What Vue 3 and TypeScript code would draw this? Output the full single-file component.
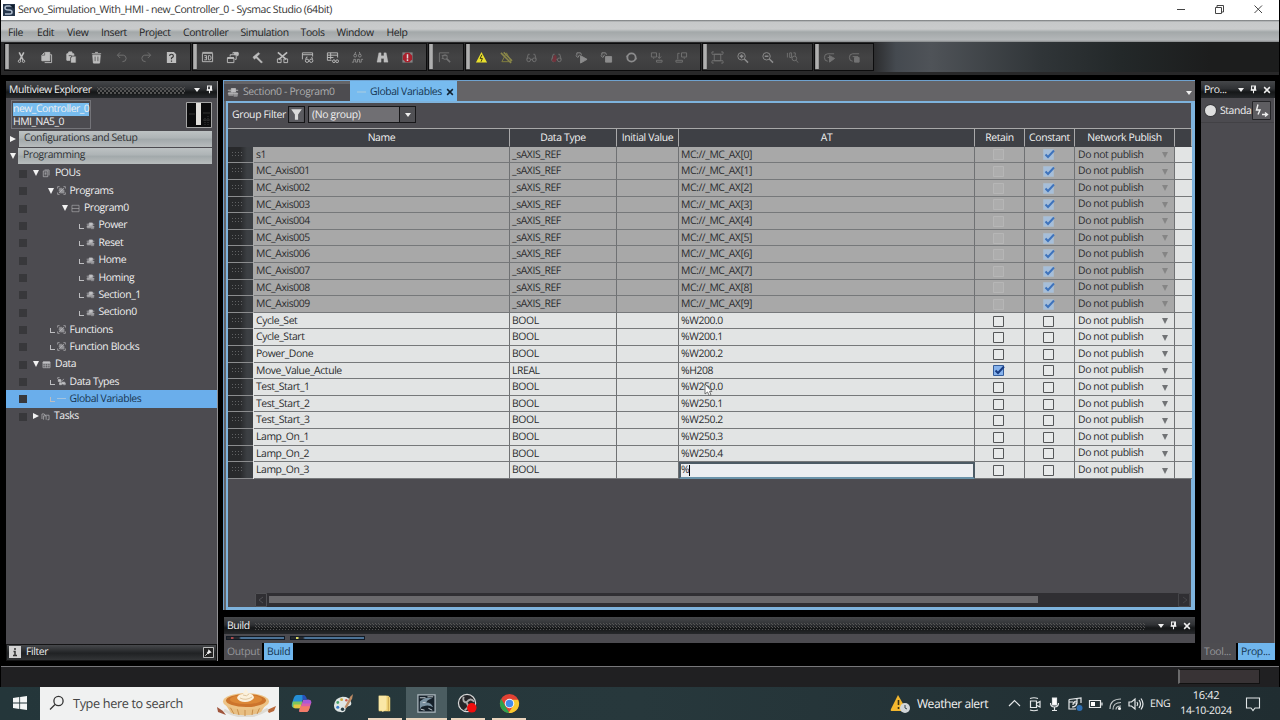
<script setup lang="ts">
interface ToolGroup { width: number; pad: number; items: string[] }
interface TreeNode { label: string; indent: number; state: 'open' | 'closed' | 'leaf'; icon: string; selected?: boolean }
interface Variable { name: string; type: string; at: string; system: boolean; retain: boolean; constant: boolean; editing?: boolean }

const menus = [
  ['File', 29], ['Edit', 30], ['View', 34], ['Insert', 38], ['Project', 44], ['Controller', 57.5],
  ['Simulation', 60], ['Tools', 36], ['Window', 50], ['Help', 40],
] as const

const glasses = '<path d="M2 9 L3.5 3.5 H5 M12 9 L10.5 3.5 H9" fill="none"/><circle cx="4" cy="9.500" r="2" fill="none"/><circle cx="10" cy="9.500" r="2" fill="none"/><path d="M6 9 H8"/>'
const icons: Record<string, string> = {
  cut: '<path d="M4.500 1.500 L8.700 9.500 M9.500 1.500 L5.300 9.500" stroke-width="1.700"/><circle cx="4.800" cy="11" r="1.300" fill="none"/><circle cx="9.200" cy="11" r="1.300" fill="none"/>',
  copy: '<path d="M5 1.500 H10.500 V10.500 H2 V4.500Z" fill="currentColor"/><path d="M11 4 H12.500 V12.500 H5" fill="none"/><path d="M2 4.500 H5 V1.500" stroke="#444" fill="none" stroke-width=".7"/>',
  paste: '<path d="M2 3 H9.500 V10 H2Z M4 1 H7.500 V3 H4Z" fill="currentColor"/><path d="M7.500 5.500 H12 V13 H6 V7Z" fill="currentColor" stroke="#3f3f40" stroke-width=".8"/><path d="M4 5 H7 V7" stroke="#555" fill="none"/>',
  trash: '<path d="M3 4.500 H11 L10.300 13 H3.700Z" fill="currentColor"/><path d="M2 3 H12 M5.500 1.500 H8.500"/><path d="M5.500 6 V11 M8.500 6 V11" stroke="#444" stroke-width=".8"/>',
  undo: '<path d="M3 4.500 H9 Q12 5 12 8 Q12 11.500 8 11.500 M5.500 1.500 L2.500 4.500 L5.500 7.500" fill="none"/>',
  redo: '<path d="M11 4.500 H5 Q2 5 2 8 Q2 11.500 6 11.500 M8.500 1.500 L11.500 4.500 L8.500 7.500" fill="none"/>',
  help: '<path d="M2 1 H9.500 L12 3.500 V13 H2Z" fill="currentColor" stroke="none"/><path d="M5 5.500 Q5 3.500 7 3.500 Q9 3.500 9 5.500 Q9 7 7 7.500 V9 M7 10.300 V11.700" stroke="#333" fill="none" stroke-width="1.300"/>',
  three: '<path d="M1.500 2.500 H12.500 V11.500 H1.500Z M1.500 1.500 H12.500 M3.500 5 H6 V9.500 H3.500 M4 7.200 H6 M8 5 H9.500 L10.800 6 V8.500 L9.500 9.500 H8Z" fill="none"/>',
  windows: '<path d="M1.500 7.500 H8.500 V12.500 H1.500Z" fill="none"/><path d="M1.500 7.500 H8.500" stroke-width="2"/><path d="M4.500 6 V4 H11 V9 H9.500 M7.500 3 V1.500 H13 V5 H11.500" fill="none"/><path d="M9 2 H13 V4 H9Z" fill="currentColor"/>',
  hammer: '<path d="M2 6.500 L8 1.500 L9.500 3 L6.500 6 L12.500 12 L11 13 L5.500 7.500 L3.500 9Z" fill="currentColor" stroke-width=".4"/>',
  nodes: '<path d="M2 1.500 L5 4 M12 1.500 L3 9 M2 1.500 L11 9" stroke-width="1.800"/><path d="M1.500 8.500 H5.500 V12.500 H1.500Z M8.500 8.500 H12.500 V12.500 H8.500Z" fill="none"/>',
  watch: '<path d="M1.500 9 V2 H12.500 V6 M1.500 4 H12.500" fill="none"/><circle cx="6.500" cy="10.500" r="1.800" fill="none"/><circle cx="11" cy="10.500" r="1.800" fill="none"/><path d="M5 9 L6 6.500 H7 M12.500 9 L11.500 6.500"/>',
  table: '<path d="M1.500 2 H12.500 V7 M1.500 2 V10 H6 M1.500 4.500 H12.500 M1.500 7 H8 M5 2 V9" fill="none"/><circle cx="8.500" cy="11" r="1.500" fill="none"/><circle cx="12" cy="11" r="1.500" fill="none"/>',
  trace: '<path d="M4 4 L5 1 M10 4 L9 1 M1 12 H3 V9 H5 V12 H7 V9 H9 V12 H11 V9 H13" fill="none"/><circle cx="4.500" cy="5" r="1.500" fill="none"/><circle cx="9.500" cy="5" r="1.500" fill="none"/>',
  find: '<path d="M3 2 H5.500 V5 H8.500 V2 H11 L13 12 H8.500 V8 H5.500 V12 H1Z" fill="currentColor" stroke-width=".3"/>',
  error: '<path d="M1.500 1.500 H12.500 V12.500 H1.500Z" fill="#858585" stroke="none"/><path d="M5 2 H9 L12 5 V9 L9 12 H5 L2 9 V5Z" fill="#a8202c" stroke="none"/><path d="M7 3.500 V8 M7 9 V10.800" stroke="#ddd" stroke-width="1.600"/>',
  inspect: '<path d="M1.500 12 V2 H12 M4 5 H10 M4 8 H6" fill="none"/><circle cx="7.500" cy="6.500" r="2.500" fill="none"/><path d="M9.200 8.200 L13 12" stroke-width="1.800"/>',
  warn: '<path d="M7 1 L13 12.500 H1Z" fill="#e9df2d" stroke="none"/><path d="M7.500 4 L5.500 8 H8 L6.500 11.500" stroke="#38350c" fill="none"/>',
  nowarn: '<path d="M2 11.500 L7 2 L12 11.500Z" fill="none" stroke="#85823f"/><path d="M1 2 L12 13 M4 1.500 L13 10.500" stroke="#8b884a" stroke-width="1.600"/>',
  glasses,
  glassesOff: glasses + '<path d="M4 5.500 L5.500 4 L7 5.500 V10 L5.500 12 L2 11Z" fill="#72333c" stroke="none"/>',
  play: '<path d="M2 5 V2 H6 L7 4 M1 5 L3 7 L5 4" fill="none"/><path d="M6 5 L13 9 L6 13Z" fill="currentColor"/>',
  stop: '<path d="M2 5 V2 H6 L7 4 M1 5 L3 7 L5 4" fill="none"/><path d="M6 6 H12.500 V12 H6Z" fill="currentColor"/>',
  ring: '<circle cx="7" cy="7" r="4.500" fill="none" stroke-width="2"/><path d="M1 6 L4 4 M13 8 L10 10"/>',
  transfer: '<path d="M1.500 2 H7 V6.500 H1.500Z M4 7 V8.500 M10 2 V8 M8.500 6 L10 8 L12 6 M7 10 H13 V12 H7Z" fill="none"/>',
  transferUp: '<path d="M7 2 H12.500 V6.500 H7Z M10 7 V8.500 M3 9 V2.500 H5 M1 10 H8 V12 H1Z" fill="none"/>',
  fit: '<path d="M3.500 3.500 H10.500 V10.500 H3.500Z M1 3 V1 H3 M11 1 H13 V3 M1 11 V13 H3 M11 13 H13 V11 M1 3.500 H13 M1 10.500 H13" fill="none"/>',
  zoomIn: '<circle cx="6" cy="5.700" r="4" fill="none"/><path d="M4 5.700 H8 M6 3.700 V7.700 M9 8.700 L13 12.500" stroke-width="1.600"/>',
  zoomOut: '<circle cx="6" cy="5.700" r="4" fill="none"/><path d="M4 5.700 H8 M9 8.700 L13 12.500" stroke-width="1.600"/>',
  zoomReset: '<path d="M1.500 2 V7 M4 2 H6 V7 H4Z M8 2 H10 V5" fill="none"/><circle cx="9" cy="8" r="2.500" fill="none"/><path d="M11 10 L13 12.500"/>',
  stepPlay: '<path d="M12 3 H5 Q1.500 3 1.500 7 Q1.500 11 5 11 M5 7 H9" fill="none"/><path d="M7 5 L12.500 8 L7 12Z" fill="currentColor"/>',
  stepStop: '<path d="M12 3 H5 Q1.500 3 1.500 7 Q1.500 11 5 11 M5 6 H11" fill="none"/><path d="M7 7 H12 V12 H7Z" fill="currentColor"/>',
  pou: '<path d="M2 3 H9 V12 H2Z M4 1.500 H11 V10 M4 5 H7 M4 7 H7 M4 9 H7" fill="none"/>',
  programs: '<path d="M1 4 V1 H4 M10 1 H13 V4 M13 10 V13 H10 M4 13 H1 V10" fill="none"/><path d="M4 3.500 H8 V6 H11 V11 H5 V8 H3Z" fill="currentColor" opacity=".6"/><path d="M3 11 L11 3"/>',
  program: '<path d="M1.500 2 H12.500 V12 H1.500Z M1.500 7 H12.500" fill="none" opacity=".8"/>',
  section: '<path d="M5 3 H10 V7 H5Z" fill="currentColor"/><path d="M2 7 H7 V11 H2Z M8 8 H12 V12 H8Z" fill="currentColor" opacity=".6"/><path d="M1 5 H5 M10 5 H13 M1 9 H13"/>',
  data: '<path d="M1.500 3 H12.500 V12 H1.500Z M1.500 6 H12.500 M5 6 V12 M9 6 V12 M1.500 9 H12.500" fill="none"/><path d="M2 3 H12 V5 H2Z" fill="currentColor"/>',
  types: '<path d="M1 3 V1 H4 M13 9 V12 H10" fill="none"/><path d="M2 4 H6 V7 H2Z M8 8 H12 V11 H8Z M4 9 H7 V12 H4Z" fill="currentColor"/><path d="M4 9 L11 3"/>',
  global: '<path d="M0 7 H14" stroke="#a6c5de" stroke-width="1.500"/>',
  tasks: '<path d="M1.500 11 V3 H5 L6 5 H12.500 V12 H10 M4 6 V12 M4 6 H8 V12" fill="none"/>',
  pin: '<path d="M4 1.500 H10 V7.500 H4Z" fill="none" stroke-width="1.700"/><path d="M8.500 2 V7 M2.500 8 H11.500 M7 8 V13" stroke-width="1.700"/>',
  close: '<path d="M2 2 L12 12 M12 2 L2 12" stroke-width="2.600"/>',
}

const groups: ToolGroup[] = [
  { width: 187, pad: 0, items: ['cut', 'copy', 'paste', 'trash', 'undo.dim', 'redo.dim', 'help'] },
  { width: 235, pad: -2, items: ['three', 'windows', 'hammer', 'nodes', 'watch', 'table', 'trace.mid', 'find', 'error'] },
  { width: 36, pad: -1, items: ['inspect.dim'] },
  { width: 236, pad: -1, items: ['warn', 'nowarn', 'glasses.dim', 'glassesOff.dim', 'play.mid', 'stop.mid', 'ring.mid', 'transfer.dim', 'transferUp.dim'] },
  { width: 111, pad: -2, items: ['fit.dim', 'zoomIn.mid', 'zoomOut.mid', 'zoomReset.dim'] },
  { width: 60, pad: -2, items: ['stepPlay.dim', 'stepStop.dim'] },
]

const tree: TreeNode[] = [
  { label: 'POUs', indent: 0, state: 'open', icon: 'pou' },
  { label: 'Programs', indent: 1, state: 'open', icon: 'programs' },
  { label: 'Program0', indent: 2, state: 'open', icon: 'program' },
  ...['Power', 'Reset', 'Home', 'Homing', 'Section_1', 'Section0'].map((label): TreeNode => ({ label, indent: 3, state: 'leaf', icon: 'section' })),
  { label: 'Functions', indent: 1, state: 'leaf', icon: 'programs' },
  { label: 'Function Blocks', indent: 1, state: 'leaf', icon: 'programs' },
  { label: 'Data', indent: 0, state: 'open', icon: 'data' },
  { label: 'Data Types', indent: 1, state: 'leaf', icon: 'types' },
  { label: 'Global Variables', indent: 1, state: 'leaf', icon: 'global', selected: true },
  { label: 'Tasks', indent: 0, state: 'closed', icon: 'tasks' },
]

const axes: Variable[] = Array.from({ length: 10 }, (_, i) => ({
  name: i === 0 ? 's1' : `MC_Axis00${i}`, type: '_sAXIS_REF', at: `MC://_MC_AX[${i}]`, system: true, retain: false, constant: true,
}))
const user: Variable[] = ([
  ['Cycle_Set', 'BOOL', '%W200.0'], ['Cycle_Start', 'BOOL', '%W200.1'], ['Power_Done', 'BOOL', '%W200.2'],
  ['Move_Value_Actule', 'LREAL', '%H208'], ['Test_Start_1', 'BOOL', '%W250.0'], ['Test_Start_2', 'BOOL', '%W250.1'],
  ['Test_Start_3', 'BOOL', '%W250.2'], ['Lamp_On_1', 'BOOL', '%W250.3'], ['Lamp_On_2', 'BOOL', '%W250.4'], ['Lamp_On_3', 'BOOL', '%'],
] as const).map(([name, type, at]) => ({ name, type, at, system: false, retain: type === 'LREAL', constant: false, editing: at === '%' }))
const variables = [...axes, ...user]
const columns = ['', 'Name', 'Data Type', 'Initial Value', 'AT', 'Retain', 'Constant', 'Network Publish', '']
</script>

<template>
  <div class="screen">
    <header class="titlebar">
      <svg class="applogo" viewBox="0 0 12 12"><path d="M0 0H12V12H0Z" fill="#26364b" /><path d="M9 2H4Q2 2 2 4Q2 6 6 6Q9 6 9 8Q9 10 7 10H2" fill="none" stroke="#aebccd" stroke-width="1.500" /><path d="M7 1L11 5V1Z" fill="#101c2b" /></svg>
      <span class="title">Servo_Simulation_With_HMI - new_Controller_0 - Sysmac Studio (64bit)</span>
      <svg class="winbtns" viewBox="0 0 100 20" fill="none" stroke="#444"><path d="M8 9.500H16" /><path d="M46.500 7.500H52.500V13.500H46.500ZM48 7V5.500H54.500V12H53" /><path d="M85.500 5.500L93 13M93 5.500L85.500 13" /></svg>
    </header>
    <nav class="menubar">
      <span v-for="[label, w] in menus" :key="label" :style="{ width: w + 'px' }"><b>{{ label }}</b></span>
    </nav>
    <div class="toolbar">
      <div v-for="(g, gi) in groups" :key="gi" class="group" :style="{ width: g.width + 'px' }">
        <i class="grip" />
        <div class="tools" :style="{ marginLeft: g.pad + 'px' }">
          <span v-for="item in g.items" :key="item" class="tool" :class="item.split('.')[1]">
            <svg viewBox="0 0 14 14" v-html="icons[item.split('.')[0]]" />
          </span>
        </div>
      </div>
    </div>

    <main class="workspace">
      <aside class="explorer">
        <div class="panelhead">
          <span>Multiview Explorer</span><i class="dots" /><i class="down" />
          <svg class="ico" viewBox="0 0 14 14" v-html="icons.pin" />
        </div>
        <div class="devices">
          <div class="devlist"><div class="active">new_Controller_0</div><div>HMI_NA5_0</div></div>
          <svg class="thumb" viewBox="0 0 26 26"><path d="M.5 .5H25.500V25.500H.5Z" fill="#0c0c0d" stroke="#a5a5a5" /><path d="M10 1H15V23H10Z" fill="#e2e0dc" /><path d="M3 12H9M17 11H24M17 18H24" stroke="#333" /><path d="M19 16V24M22 14V23" stroke="#38383a" stroke-dasharray="1 1" /></svg>
        </div>
        <div class="section"><i class="tri right" /><span>Configurations and Setup</span></div>
        <div class="section"><i class="tri open" /><span>Programming</span></div>
        <div class="tree">
          <div v-for="n in tree" :key="n.label" class="node" :class="{ selected: n.selected }">
            <i class="mark" />
            <div class="branch" :style="{ marginLeft: n.indent * 14.5 + 'px' }">
              <i v-if="n.state === 'open'" class="tri open" />
              <i v-else-if="n.state === 'closed'" class="tri right" />
              <i v-else class="elbow" />
              <svg class="ico" viewBox="0 0 14 14" v-html="icons[n.icon]" />
              <span>{{ n.label }}</span>
            </div>
          </div>
        </div>
        <div class="filterbar">
          <svg class="info" viewBox="0 0 12 12"><path d="M0 0H12V12H0Z" fill="#d3d3d3" /><path d="M6 2V4M4.500 5.500H6V9M4 9.500H8" fill="none" stroke="#333" stroke-width="1.500" /></svg>
          <span>Filter</span>
          <svg class="filterpin" viewBox="0 0 12 12"><path d="M.5 .5H11.500V11.500H.5Z" fill="#222" stroke="#d0d0d0" /><path d="M6 2.500L9.500 6L7.500 6.500L5.500 8L4 6.500L5.500 4.500Z" fill="#eee" /><path d="M2.500 9.500L5 7" stroke="#eee" /></svg>
        </div>
      </aside>

      <section class="center">
        <div class="editor">
          <div class="tabs">
            <div class="tab"><svg class="ico" viewBox="0 0 14 14" v-html="icons.section" /><span>Section0 - Program0</span></div>
            <div class="tab current"><i class="dash" /><span>Global Variables</span><svg class="x" viewBox="0 0 14 14" v-html="icons.close" /></div>
            <i class="down" />
          </div>
          <div class="frame">
            <div class="groupfilter">
              <span>Group Filter</span>
              <svg class="funnel" viewBox="0 0 16 16"><path d="M.5 .5H15.500V15.500H.5Z" fill="#5b5b60" stroke="#151517" /><path d="M3 3H13L9.500 8V13H6.500V8Z" fill="#dadada" /></svg>
              <div class="select"><span>(No group)</span><b><i class="down" /></b></div>
            </div>
            <div class="grid">
              <div class="row head"><div v-for="(c, i) in columns" :key="i" class="cell">{{ c }}</div></div>
              <div v-for="v in variables" :key="v.name" class="row" :class="{ system: v.system }">
                <div class="cell handle"><i /></div>
                <div class="cell">{{ v.name }}</div>
                <div class="cell">{{ v.type }}</div>
                <div class="cell" />
                <div class="cell" :class="{ editing: v.editing }">{{ v.at }}<i v-if="v.editing" class="caret" /></div>
                <div v-for="(on, k) in [v.retain, v.constant]" :key="k" class="cell check">
                  <svg viewBox="0 0 12 12" :class="{ on }"><path class="box" d="M.5 .5H10.500V10.500H.5Z" /><path v-if="on" class="tick" d="M2.500 5.500L5 8L11 1.500" /></svg>
                </div>
                <div class="cell publish"><span>Do not publish</span><i class="down" /></div>
                <div class="cell tail" />
              </div>
            </div>
            <div class="hscroll">
              <svg class="arrow" viewBox="0 0 12 14"><path d="M.5 .5H11.500V13.500H.5Z M8 4L4 7L8 10" fill="none" stroke="#515155" /></svg>
              <div class="track"><i /></div>
              <svg class="arrow" viewBox="0 0 12 14"><path d="M.5 .5H11.500V13.500H.5Z M5 4L9 7L5 10" fill="none" stroke="#454549" /></svg>
            </div>
            <svg class="pointer" viewBox="0 0 9 14"><path d="M1 1V11L3.500 9L5.200 12.500L7 11.600L5.500 8.500H8Z" fill="#fff" stroke="#555" stroke-width=".8" /></svg>
          </div>
        </div>
        <div class="build">
          <div class="panelhead"><span>Build</span><i class="dots" /><i class="down" /><svg class="ico" viewBox="0 0 14 14" v-html="icons.pin" /><svg class="x" viewBox="0 0 14 14" v-html="icons.close" /></div>
          <div class="strips"><i class="errors" /><i class="warnings" /></div>
        </div>
        <div class="bottomtabs"><span class="out">Output</span><span class="current">Build</span></div>
      </section>

      <aside class="props">
        <div class="panelhead"><span>Pro...</span><i class="down" /><svg class="ico" viewBox="0 0 14 14" v-html="icons.pin" /><svg class="x" viewBox="0 0 14 14" v-html="icons.close" /></div>
        <div class="propbody">
          <div class="standard"><i class="disc" /><span>Standa</span>
            <svg viewBox="0 0 19 19"><path d="M.5 .5H18.500V18.500H.5Z" fill="#5e5d61" stroke="#242427" /><path d="M6 3.500L4.500 9H8L6 13.500M10 13.500H15M13 11.500L15.500 13.500L13 15.500" fill="none" stroke="#eee" stroke-width="1.400" /></svg>
          </div>
        </div>
        <div class="bottomtabs"><span class="tool-tab">Tool...</span><span class="current">Prop...</span></div>
      </aside>
    </main>

    <div class="status"><i /></div>

    <footer class="taskbar">
      <svg class="win" viewBox="0 0 14 14"><path d="M0 2L6.300 1V6.600H0ZM7.100 .9L14 0V6.600H7.100ZM0 7.400H6.300V13L0 12ZM7.100 7.400H14V14L7.100 13.100Z" fill="#f4f6f6" /></svg>
      <div class="search">
        <svg class="glass" viewBox="0 0 16 16" fill="none" stroke="#333" stroke-width="1.300"><circle cx="9.500" cy="6" r="4.600" /><path d="M6 9.500L1 14.500" /></svg>
        <span>Type here to search</span>
        <svg class="pie" viewBox="0 0 62 28">
          <path d="M1 18L7 22L10 26L2 23Z" fill="#a0553c" /><path d="M51 21L60 17L58 22L53 24Z" fill="#b8683a" /><path d="M8 21Q30 34 52 20" fill="none" stroke="#dedbd4" stroke-width="3" />
          <path d="M8 13L15 24Q30 29 45 23L52 12Z" fill="#e8bf82" /><path d="M14 18L18 25M21 19L23 26M29 20V27M37 19L36 26M44 18L41 25" stroke="#c98e4a" />
          <ellipse cx="30" cy="12.500" rx="23" ry="8.500" fill="#edc487" /><ellipse cx="30" cy="11.500" rx="20" ry="6.500" fill="#cc742c" /><ellipse cx="30" cy="10.500" rx="16" ry="4.500" fill="#dc8837" />
          <path d="M21 9Q22 5 27 5Q28 1 30 0Q32 2 32 4Q38 5 38 9Q35 13 29 13Q23 13 21 9Z" fill="#fbf1dd" /><path d="M24 9Q30 12 36 8M27 6Q31 8 33 5" fill="none" stroke="#dfc6a0" />
        </svg>
      </div>
      <div class="apps">
        <span class="app copilot"><svg viewBox="0 0 22 22"><path d="M6 2H12Q14 2 13 5L10 15H3Q0 15 1 11L3 5Q4 2 6 2Z" fill="#258fd6" /><path d="M2 9H12L10 16H4Q0 16 2 9Z" fill="#7dc65c" /><path d="M3 12H11L10 16H4Q2 15 3 12Z" fill="#e5c642" /><path d="M13 7H18Q22 7 21 11L19 17Q18 20 15 20H10Q8 20 9 17Z" fill="#d95eab" /><path d="M13 7H19Q22 8 21 11H12Z" fill="#a85ad7" /><path d="M9 17L10 14H20L19 17Q18 20 15 20H10Q8 20 9 17Z" fill="#f27c69" /><path d="M12 2H14Q16 3 17 7H12Z" fill="#2853bb" /></svg></span>
        <span class="app paint"><svg viewBox="0 0 22 22"><path d="M1 13Q2 5 10 4Q18 4 19 10Q20 13 16 14Q13 15 13 18Q12 21 8 20Q1 19 1 13Z" fill="#dfe5e4" /><path d="M12 15L18 4L21 1L20 6L14 16Z" fill="#bf8c65" /><circle cx="5" cy="10" r="1.500" fill="#4aa36b" /><circle cx="9" cy="7" r="1.500" fill="#caa83b" /><circle cx="5" cy="15" r="1.600" fill="#3b7dcb" /><circle cx="10" cy="17" r="1.800" fill="#263b42" /><circle cx="14" cy="7.500" r="1.300" fill="#cf5a4d" /></svg></span>
        <span class="app open"><svg viewBox="0 0 22 22"><path d="M5 3H15L17 5V19H5Z" fill="#f2d67a" /><path d="M5 3H13V17L9 20L8 18H5Z" fill="#fae7a5" /><path d="M15 4V19" stroke="#c9a44f" /></svg></span>
        <span class="app open focus"><svg viewBox="0 0 22 22"><path d="M2 2H20V20H2Z" fill="#152029" stroke="#aebac1" stroke-width="1.300" /><path d="M4 9Q10 3 17 6Q11 7 11 10Q16 10 18 15Q13 12 8 14Q5 14 4 18Z" fill="#7890a0" /><path d="M4 5H10M13 16L17 18M7 10H10M12 4H18M5 17L9 18" stroke="#c7d0d5" /></svg></span>
        <span class="app open"><svg viewBox="0 0 22 22"><circle cx="10.500" cy="10.500" r="9" fill="#252528" stroke="#d7d7d7" stroke-width="1.300" /><path d="M11 10Q5 10 7 4M10 10Q14 4 18 9M10 10Q14 15 8 18" fill="none" stroke="#aaa" stroke-width="2" /><circle cx="15.500" cy="15.500" r="5" fill="#f20d0d" /></svg></span>
        <span class="app open"><svg viewBox="0 0 22 22"><circle cx="11" cy="11" r="10" fill="#e34133" /><path d="M2.300 6L7 14.500L11 21A10 10 0 0 1 2.300 6Z" fill="#2ea14d" /><path d="M21 10A10 10 0 0 1 10 21L15 13L14 7H20Z" fill="#f8ca2f" /><circle cx="11" cy="11" r="5" fill="#f5f7f8" /><circle cx="11" cy="11" r="3.900" fill="#438bea" /></svg></span>
      </div>
      <div class="weather"><svg viewBox="0 0 22 20"><path d="M8 1L16 15Q17 17 15 17H2Q0 17 1 15Z" fill="#f3b72e" /><path d="M8.500 6V11M8.500 13V15" stroke="#3e3213" stroke-width="1.600" /><circle cx="15" cy="14" r="5" fill="#d2d6d8" /><path d="M15 11V14L17 15" stroke="#39464d" fill="none" /></svg><span>Weather alert</span></div>
      <svg class="tray" viewBox="0 0 140 20" fill="none" stroke="#e5e8e9" stroke-width="1.200">
        <path d="M3 12L8.500 6.500L14 12" />
        <path d="M24.500 7H30.500V13.500H24.500ZM31 9L34 7.500V13L31 11.500M24 4.500Q28 3 32 4.500M24 16Q28 17.500 32 16" />
        <path d="M46.500 4H50.500V11H46.500Z" fill="#fff" /><path d="M44.500 9Q44.500 13 48.500 13Q52.500 13 52.500 9M48.500 13V17M46 16.500H51" />
        <path d="M63 5.500L75 4V9M63 5.500V15H70M63 8H67M67 11Q67 7 71 7M71 5V9H67M66 13Q70 13 71 9" /><circle cx="73.500" cy="14" r="3" fill="#2f6fb2" stroke="none" />
        <path d="M83.500 6.500H94.500V13.500H83.500ZM96 8.500V11.500" /><path d="M85 8H89V12H85Z" fill="#fff" stroke="none" />
        <path d="M104 15Q104 5 115 5M107 15.500Q107 8.500 115 8.500M110 15.500Q110 12 115 12" opacity=".8" /><circle cx="113.500" cy="14.500" r="1" fill="#fff" />
        <path d="M123 8H125.500L129 5V15L125.500 12H123ZM131 8Q132.500 10 131 12M133 6Q136 10 133 14M135 4.500Q139 10 135 15.500" />
      </svg>
      <span class="lang">ENG</span>
      <div class="clock"><span>16:42</span><span class="date">14-10-2024</span></div>
      <svg class="notice" viewBox="0 0 16 16" fill="none" stroke="#e1e6e7" stroke-width="1.100"><path d="M1.500 2H14.500V12H10L8 14.500L6 12H1.500Z" /></svg>
    </footer>
  </div>
</template>

<style>
html, body { margin: 0; background: #000; }
</style>

<style scoped>
* { box-sizing: border-box; }
.screen { width: 1280px; height: 720px; overflow: hidden; background: #000; display: flex; flex-direction: column; font: 10.4px/14px "Open Sans", "Noto Sans", sans-serif; letter-spacing: -.4px; text-rendering: geometricPrecision; color: #f0f0f0; white-space: nowrap; }
svg { display: block; flex: none; }
i { font-style: normal; flex: none; }
.titlebar { height: 20px; flex: none; margin-left: 1px; margin-right: 1px; background: #fff; display: flex; align-items: center; color: #333; }
.applogo { width: 12px; height: 12px; margin: 0 3px 0 2px; }
.title { font-size: 10.500px; letter-spacing: -.43px; }
.winbtns { width: 100px; height: 20px; margin-left: auto; margin-right: 10px; }
.menubar { height: 22px; flex: none; margin: 0 1px; padding-left: 7px; display: flex; align-items: center; color: #232325; background: linear-gradient(#737678 0, #c6c8c9 2px, #c9cbcc 9px, #a3a8a9 12px, #b4b7b9 20px, #86898a); }
.menubar b { font-weight: 400; }
.menubar span { flex: none; display: block; padding-top: 3px; letter-spacing: -.34px; }
.toolbar { height: 33px; flex: none; margin: 0 1px; padding: 1px 0 0 3px; display: flex; gap: 1px; align-items: flex-start; background: linear-gradient(90deg, #29292a 0 870px, #454a50 895px, #4f5358 930px, #303538 1040px, #232829 1120px, #1c1d1d 1210px); border-bottom: 3px solid #282829; }
.group { height: 28px; flex: none; border: 1px solid #0c0c0d; background: linear-gradient(#3a3a3b, #434344 50%, #3d3d3e); display: flex; }
.grip { width: 4px; height: 25px; background: linear-gradient(90deg, #858585, #bdbdbd, #8a8a8a); }
.tools { display: flex; }
.tool { width: 25px; height: 26px; display: grid; place-items: center; color: #bdbdbd; }
.tool.dim { color: #727273; }
.tool.mid { color: #8c8c8d; }
.tool svg { width: 13px; height: 13px; }
.tool svg, .ico, .x { stroke: currentColor; fill: none; }
.workspace { height: 591px; flex: none; padding: 5px 5px 6px 6px; display: flex; gap: 6px; background: #000; }
.explorer { width: 212px; height: 580px; margin-right: -1px; flex: none; background: #4c4b50; display: flex; flex-direction: column; border-right: 1px solid #909093; margin-top: 1px; }
.panelhead { height: 17px; flex: none; padding: 0 3px; display: flex; align-items: center; background: linear-gradient(#45474a, #303235 45%, #151718 65%, #26282b); }
.panelhead span { padding-top: 1px; }
.dots { flex: 1; height: 7px; margin: 1px 9px 0 5px; background-image: radial-gradient(circle, #555 0 .7px, transparent 1px), radial-gradient(circle, #555 0 .7px, transparent 1px); background-size: 4px 4px; background-position: 0 0, 2px 2px; }
.down { width: 0; height: 0; border: 3px solid transparent; border-top: 4px solid #eee; border-bottom: 0; }
.panelhead .down { margin-top: 1px; }
.panelhead .ico { width: 9px; height: 9px; margin-left: 5px; }
.x { width: 8px; height: 8px; margin-left: 5px; }
.devices { height: 32px; flex: none; display: flex; justify-content: space-between; padding: 2px 5px 0 5px; line-height: 13px; }
.devlist { width: 80px; height: 29px; border: 1px solid #737378; padding: 2px 1px 0; letter-spacing: -.48px; }
.devlist .active { background: #78bdf0; width: 76px; }
.thumb { width: 26px; height: 26px; margin-top: 2px; }
.section { height: 17.400px; flex: none; display: flex; align-items: center; }
.section span { height: 16px; flex: 1; margin-right: 5px; padding-left: 5px; line-height: 15px; color: #303235; background: linear-gradient(#bdc2c3, #adb3b5 45%, #a1a8aa 50%, #b8bcbd); }
.tri { width: 0; height: 0; margin: 0; }
.tri.open { border: 3.500px solid transparent; border-top: 6px solid #f2f2f2; border-bottom: 0; }
.tri.right { border: 3.500px solid transparent; border-left: 6px solid #f2f2f2; border-right: 0; margin-right: 1px; }
.section .tri { margin-left: 4px; margin-right: 2px; }
.section .tri.right { margin-right: 3px; }
.tree { flex: 1; }
.node { height: 17.350px; display: flex; align-items: center; }
.node.selected { background: #6aaeeb; color: #18344f; }
.mark { width: 8px; height: 8px; margin-left: 13px; background: #38383b; margin-right: 6px; margin-top: 1px; }
.branch { display: flex; align-items: center; }
.branch .ico { width: 9px; height: 9px; margin: 0 4px 0 2px; color: #c2c2c5; }
.branch .tri.open { margin-right: 1px; }
.branch .tri.right { margin-right: 0; }
.branch .elbow { width: 5px; height: 5px; border: 1px solid #bdbdc0; border-top: 0; border-right: 0; margin: 2px 0 0 2px; }
.filterbar { height: 17px; flex: none; display: flex; align-items: center; padding: 0 2px; background: linear-gradient(#47494c, #202224 55%, #333537); border: 1px solid #141415; }
.filterbar span { margin-top: -2px; }
.info { width: 12px; height: 12px; margin-right: 5px; margin-top: -1px; }
.filterpin { width: 11px; height: 11px; margin-left: auto; margin-top: -1px; }
.center { width: 972px; flex: none; display: flex; flex-direction: column; }
.editor { height: 530px; flex: none; border: solid #6fa2cf; border-width: 1px 0 0 1px; background: #656467; }
.tabs { height: 20px; display: flex; align-items: flex-end; }
.tab { width: 126px; height: 17px; display: flex; align-items: center; color: #acacae; background: #4d4c50; padding: 0 0 2px 3px; letter-spacing: -.34px; }
.tab .ico { width: 12px; height: 12px; margin-right: 4px; color: #bcbcbe; }
.tab.current { width: 107px; height: 20px; background: #77bbef; color: #15344f; padding: 1px 0 0 7px; letter-spacing: -.4px; }
.dash { width: 9px; height: 2px; background: #91c4e7; margin-right: 4px; }
.tab .x { margin-left: auto; margin-right: 3px; color: #10202f; }
.tabs > .down { margin-left: auto; margin-right: 3px; margin-bottom: 6px; }
.frame { position: relative; height: 509px; margin-left: 2px; border: solid #7eb3dd; border-width: 2px 4px 3px 2px; background: #4c4b50; display: flex; flex-direction: column; }
.groupfilter { height: 25px; flex: none; padding: 0 0 2px 4px; display: flex; align-items: center; letter-spacing: -.32px; }
.groupfilter > span { width: 56px; }
.funnel { width: 17px; height: 17px; }
.select { margin-left: 3px; width: 108px; height: 17px; border: 1px solid #171719; background: #706f73; display: flex; align-items: center; padding-left: 3px; }
.select b { width: 16px; height: 15px; margin-left: auto; background: #505054; border-left: 1px solid #171719; display: grid; place-items: center; }
.grid { flex: none; }
.row { height: 16.620px; display: grid; grid-template-columns: 26px 256px 107px 62px 296px 50px 50px 100px 17px; background: #e2e4e4; color: #2b2c2e; }
.row.system { background: #a8a8a8; }
.cell { border-right: 1px solid #6f7173; border-bottom: 1px solid #76787a; padding-left: 2px; line-height: 17px; overflow: hidden; min-width: 0; }
.head { height: 18.700px; background: #3e4045; color: #f2f2f2; text-align: center; border-top: 1px solid #a8a8a8; letter-spacing: -.34px; }
.head .cell { border-color: #a9a9aa; border-bottom-color: #3e4045; padding: 0; line-height: 19px; }
.head .cell:first-child { border-right-color: #3e4045; }
.handle { background: linear-gradient(90deg, #28292b 12px, #3c3f43 19px); border-right: 0; border-bottom-color: #8b8c8e; padding: 4px 0 0 3px; margin-right: 1px; }
.handle i { display: block; width: 12px; height: 6px; background-image: radial-gradient(circle, #606163 0 .6px, transparent .9px); background-size: 3px 3px; }
.check { display: grid; place-items: center; padding: 2px 0 0; }
.check svg { width: 12px; height: 12px; margin-right: 1px; overflow: visible; }
.box { fill: #e8eaea; stroke: #555759; }
.tick { fill: none; stroke: #173c83; stroke-width: 2; }
.on .box { fill: #86b2ec; stroke: #355d9b; }
.system .box { fill: #adadad; stroke: #b6b6b6; }
.system .on .box { fill: #a6bed9; stroke: #a9bacb; }
.system .tick { stroke: #3e73bc; }
.editing { border: 2px solid #4d5b65; border-bottom-color: #6b93aa; line-height: 13px; padding-left: 0; background: #eceef1; display: flex; }
.caret { width: 1px; height: 11px; background: #000; margin-top: 1px; }
.publish { display: flex; align-items: center; padding-left: 3px; }
.publish span { padding-top: 1px; }
.publish .down { margin-left: auto; margin-right: 6px; margin-top: 1px; border-top: 6px solid #717375; }
.system .publish .down { border-top-color: #858585; }
.tail { border-right: 0; background: #e2e4e4; }
.hscroll { height: 14px; margin-top: auto; margin-left: 27px; margin-right: 1px; background: #302f33; display: flex; }
.arrow { width: 12px; height: 14px; }
.track { flex: 1; padding: 3px 0 0 2px; }
.track i { display: block; width: 769px; height: 7px; background: #6a696c; }
.pointer { position: absolute; left: 476px; top: 280px; width: 9px; height: 14px; }
.build { height: 26px; flex: none; margin: 7px 0 0 1px; background: #4c4b50; }
.build .panelhead { height: 17px; padding-right: 4px; }
.build .dots { margin-right: 12px; background-size: 3px 3px; }
.strips { display: flex; gap: 5px; padding: 2px 3px 0 2px; }
.strips i { height: 4px; border: 1px solid #121a24; background: linear-gradient(90deg, #26282c 4px, #a8484c 4px 6px, #26282c 7px 12px, #4c7296 14px); width: 59px; }
.strips .warnings { width: 75px; background: linear-gradient(90deg, #26282c 5px, #dddb68 5px 7px, #26282c 8px 12px, #4c7296 14px); }
.bottomtabs { height: 17px; display: flex; gap: 2px; margin-left: 1px; letter-spacing: -.3px; }
.bottomtabs span { height: 17px; background: #4d4c50; color: #96969a; padding: 2px 3px 1px; }
.bottomtabs .out { width: 38px; }
.bottomtabs .current { background: #70b6ed; color: #15344f; width: 29px; }
.props { width: 74px; flex: none; display: flex; flex-direction: column; padding-top: 1px; }
.props .panelhead span { margin-right: auto; }
.props .panelhead { padding-right: 4px; }
.propbody { height: 545px; flex: none; background: #4c4b50; border-right: 1px solid #77777a; }
.standard { height: 25px; display: flex; align-items: center; padding: 1px 0 0 4px; border-bottom: 1px solid #424145; }
.disc { width: 11px; height: 11px; border-radius: 50%; background: #dedede; margin-right: 4px; box-shadow: 0 0 0 1px #39393c; }
.standard span { width: 32px; overflow: hidden; padding-top: 1px; }
.standard svg { width: 19px; height: 19px; }
.props .bottomtabs { margin-left: 0; }
.props .tool-tab { width: 35px; }
.props .bottomtabs .current { width: 37px; }
.status { height: 21px; flex: none; margin: 0 1px; background: #202022; border-top: 1px solid #77777a; padding: 2px 0 0 1177px; }
.status i { display: block; width: 82px; height: 15px; background: #383335; border: 1px solid #111; border-left: 2px solid #6a6a6b; }
.taskbar { height: 33px; flex: none; background: linear-gradient(90deg, #24363a, #27383c 50%, #202d31); display: flex; align-items: center; font-size: 11px; letter-spacing: -.32px; }
.win { width: 14px; height: 14px; margin: -1px 13px 0; }
.search { width: 239px; height: 33px; padding-bottom: 1px; background: #f0f1f1; color: #444; display: flex; align-items: center; font-size: 12.700px; letter-spacing: -.36px; }
.glass { width: 16px; height: 16px; margin: 0 8px 0 9px; }
.pie { width: 62px; height: 28px; margin-left: auto; margin-right: 1px; }
.apps { display: flex; }
.app { width: 41.500px; height: 33px; display: grid; place-items: center; }
.app svg { width: 21px; height: 21px; margin-top: -1px; }
.copilot { margin-left: 2px; }
.open { background: linear-gradient(#ead4bd, #ead4bd) center bottom / 34px 2px no-repeat; }
.open.focus { background: linear-gradient(#ead4bd, #ead4bd) center bottom / 41px 2px no-repeat, #4b5d61; }
.weather { margin-left: auto; display: flex; align-items: center; gap: 5px; font-size: 12.100px; letter-spacing: -.46px; }
.weather svg { width: 22px; height: 20px; }
.tray { width: 140px; height: 20px; margin-left: 18px; }
.lang { margin-left: 4px; width: 20px; font-size: 10.500px; }
.clock { width: 52px; margin: 0 0 0 10px; display: flex; flex-direction: column; align-items: center; line-height: 15.500px; }
.date { font-size: 10.500px; }
.notice { width: 16px; height: 16px; margin: 0 19px 0 13px; }
</style>
